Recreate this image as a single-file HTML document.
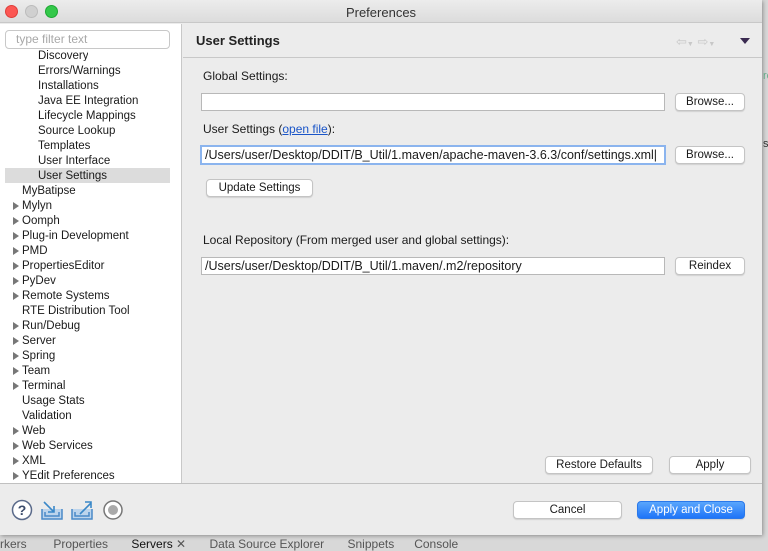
<!DOCTYPE html>
<html><head><style>
*{margin:0;padding:0;box-sizing:border-box}
body{width:768px;height:546px;overflow:hidden;background:#d8d8d8;font-family:"Liberation Sans",sans-serif;font-size:12px;color:#1a1a1a;position:relative}
.a{position:absolute;white-space:nowrap}
.btn{position:absolute;background:#fff;border:1px solid #c4c4c4;border-radius:4px;text-align:center;font-size:11.5px;line-height:16px;box-shadow:0 1px 1px rgba(0,0,0,.12)}
.inp{position:absolute;background:#fff;border:1px solid #b8b8b8;height:18px;line-height:16px;padding-left:3px;font-size:12.5px}
.tri{position:absolute;width:0;height:0;border-left:6px solid #777;border-top:4px solid transparent;border-bottom:4px solid transparent}
.t{font-size:11.5px}
</style></head><body>
<div class="a" style="left:0;top:0;width:762px;height:535px;background:#ececec;box-shadow:1px 1px 4px rgba(0,0,0,.35)"></div>
<div class="a" style="left:0;top:0;width:762px;height:23px;background:linear-gradient(#ececec,#dcdcdc);border-bottom:1px solid #c8c8c8"></div>
<div class="a" style="left:5px;top:5px;width:13px;height:13px;border-radius:50%;background:#fc5753;border:1px solid #de3f3b"></div>
<div class="a" style="left:25px;top:5px;width:13px;height:13px;border-radius:50%;background:#d0d0d0;border:1px solid #bcbcbc"></div>
<div class="a" style="left:45px;top:5px;width:13px;height:13px;border-radius:50%;background:#34c84a;border:1px solid #1ea834"></div>
<div class="a" style="left:0;width:762px;top:5px;text-align:center;font-size:13px;color:#333">Preferences</div>
<div class="a" style="left:0;top:24px;width:182px;height:459px;background:#fff;border-right:1px solid #c8c8c8"></div>
<div class="a" style="left:5px;top:30px;width:165px;height:19px;border:1px solid #c8c8c8;border-radius:4px;background:#fff;color:#a8a8a8;padding-left:10px;line-height:17px;font-size:12px">type filter text</div>
<div class="a" style="left:5px;top:168px;width:165px;height:15px;background:#dcdcdc"></div>
<div id="tree"></div>
<div class="a" style="left:196px;top:33px;font-size:13px;font-weight:bold;color:#222">User Settings</div>
<div class="a" style="left:183px;top:57px;width:579px;height:1px;background:#c8c8c8"></div>
<div class="a" style="left:676px;top:34px;color:#c8c8c8;font-size:13px">⇦<span style="font-size:7px">▼</span> ⇨<span style="font-size:7px">▼</span></div>
<div class="a" style="left:740px;top:38px;width:0;height:0;border-top:6px solid #3a2a50;border-left:5px solid transparent;border-right:5px solid transparent"></div>
<div class="a" style="left:203px;top:69px">Global Settings:</div>
<div class="inp" style="left:201px;top:93px;width:464px"></div>
<div class="btn" style="left:675px;top:93px;width:70px;height:18px">Browse...</div>
<div class="a" style="left:203px;top:122px">User Settings (<span style="color:#1a55c8;text-decoration:underline">open file</span>):</div>
<div class="inp" style="left:200px;top:145px;width:466px;height:20px;border:2px solid #8bb4ee;padding-left:3px">/Users/user/Desktop/DDIT/B_Util/1.maven/apache-maven-3.6.3/conf/settings.xml|</div>
<div class="btn" style="left:675px;top:146px;width:70px;height:18px">Browse...</div>
<div class="btn" style="left:206px;top:179px;width:107px;height:18px">Update Settings</div>
<div class="a" style="left:203px;top:233px">Local Repository (From merged user and global settings):</div>
<div class="inp" style="left:201px;top:257px;width:464px">/Users/user/Desktop/DDIT/B_Util/1.maven/.m2/repository</div>
<div class="btn" style="left:675px;top:257px;width:70px;height:18px">Reindex</div>
<div class="btn" style="left:545px;top:456px;width:108px;height:18px">Restore Defaults</div>
<div class="btn" style="left:669px;top:456px;width:82px;height:18px">Apply</div>
<div class="a" style="left:0;top:483px;width:762px;height:1px;background:#c0c0c0"></div>
<svg class="a" style="left:10px;top:497px" width="120" height="26" viewBox="0 0 120 26">
<circle cx="12" cy="13" r="9.5" fill="#fff" stroke="#5a6a8a" stroke-width="1.5"/>
<text x="12" y="18" font-family="Liberation Sans" font-size="14" font-weight="bold" text-anchor="middle" fill="#3a4a6a">?</text>
<path d="M32 12v10h20v-10M35 15v4h14v-4" fill="#bcd4ec" stroke="#4a8ac8" stroke-width="1.5"/>
<path d="M34 5l10 10M38 15h6v-6" fill="none" stroke="#3a88c8" stroke-width="1.6"/>
<path d="M62 12v10h20v-10M65 15v4h14v-4" fill="#bcd4ec" stroke="#4a8ac8" stroke-width="1.5"/>
<path d="M70 17l11-11M75 5h6v6" fill="none" stroke="#3a88c8" stroke-width="1.6"/>
<circle cx="103" cy="13" r="9" fill="#fff" stroke="#777" stroke-width="1.5"/>
<circle cx="103" cy="13" r="5" fill="#aaa"/>
</svg>
<div class="btn" style="left:513px;top:501px;width:109px;height:18px">Cancel</div>
<div class="btn" style="left:637px;top:501px;width:108px;height:18px;background:linear-gradient(#5aa6fc,#1e74f8);color:#fff;border-color:#2a78ea">Apply and Close</div>
<div class="a" style="left:0;top:537px;font-size:12px;color:#555">rkers &nbsp;&nbsp;&nbsp;&nbsp;&nbsp;&nbsp; Properties &nbsp;&nbsp;&nbsp;&nbsp;&nbsp;&nbsp;<b style="font-weight:normal;color:#111">Servers</b> ✕ &nbsp;&nbsp;&nbsp;&nbsp;&nbsp; Data Source Explorer &nbsp;&nbsp;&nbsp;&nbsp;&nbsp; Snippets &nbsp;&nbsp;&nbsp;&nbsp; Console</div>
<div class="a" style="left:763px;top:70px;font-size:11px;color:#6a8">re</div>
<div class="a" style="left:763px;top:138px;font-size:11px;color:#333">so</div>
<script>
var items=[["Discovery",1],["Errors/Warnings",1],["Installations",1],["Java EE Integration",1],["Lifecycle Mappings",1],["Source Lookup",1],["Templates",1],["User Interface",1],["User Settings",1],["MyBatipse",0],["Mylyn",2],["Oomph",2],["Plug-in Development",2],["PMD",2],["PropertiesEditor",2],["PyDev",2],["Remote Systems",2],["RTE Distribution Tool",0],["Run/Debug",2],["Server",2],["Spring",2],["Team",2],["Terminal",2],["Usage Stats",0],["Validation",0],["Web",2],["Web Services",2],["XML",2],["YEdit Preferences",2]];
var h="";items.forEach(function(it,i){var y=49+i*15;var x=it[1]==1?38:22;
h+='<div class="a t" style="left:'+x+'px;top:'+y+'px;line-height:14px;'+(i==0?'height:12px;overflow:hidden;':'')+'">'+it[0]+'</div>';
if(it[1]==2)h+='<div class="tri" style="left:13px;top:'+(y+3)+'px"></div>';});
document.getElementById("tree").innerHTML=h;
</script>
</body></html>
